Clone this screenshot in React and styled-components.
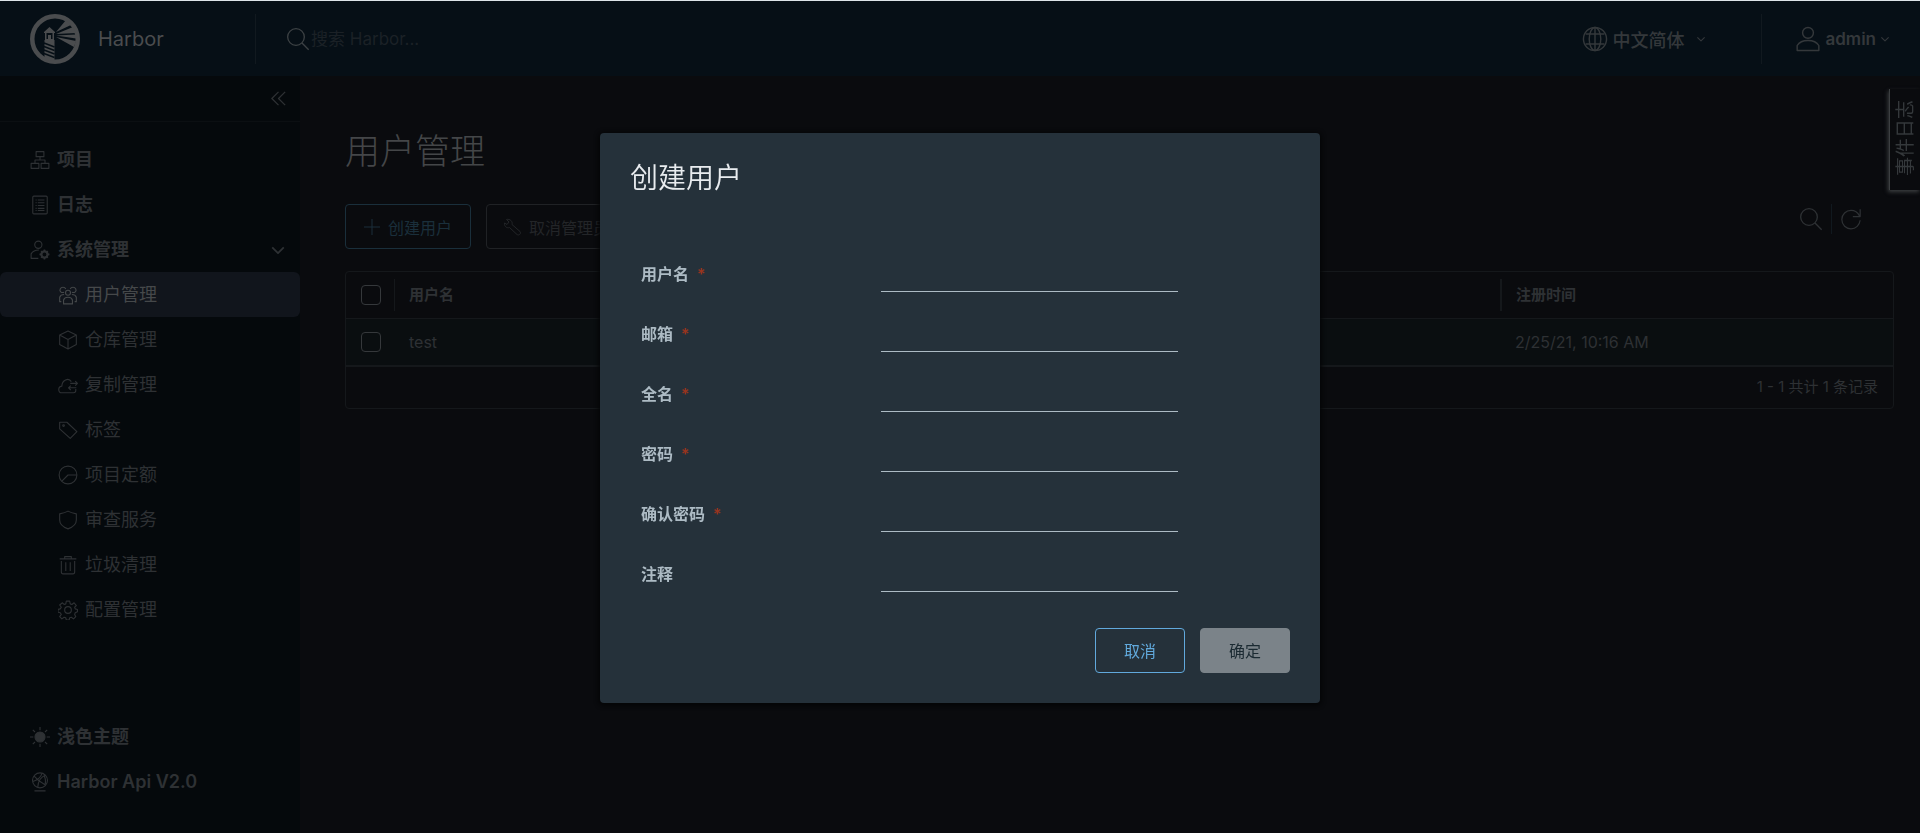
import React, { useState } from 'react'
import styled, { createGlobalStyle, css } from 'styled-components'

const GlobalStyle = createGlobalStyle`
  * {
    box-sizing: border-box;
  }
  body {
    margin: 0;
    background: #0a0b0e;
    color: #2e3134;
    font-family: Inter, "Noto Sans CJK SC", sans-serif;
    font-size: 17px;
  }
  button, input {
    font-family: inherit;
  }
`

const Page = styled.div`
  display: flex;
  flex-direction: column;
  min-height: 100vh;
  border-top: 1px solid #dde4e8;
`

const Header = styled.header`
  display: flex;
  align-items: center;
  height: 75px;
  padding: 0 30px;
  background: #060f16;
`

const Brand = styled.a`
  display: flex;
  align-items: center;
  gap: 18px;
  width: 225px;
  color: #4a4c4e;
  font-size: 20px;
  text-decoration: none;
`

const Divider = styled.span`
  width: 1px;
  height: ${props => props.$height || 50}px;
  background: #11191f;
`

const Search = styled.label`
  display: flex;
  flex: 1;
  align-items: center;
  gap: 1px;
  padding-left: 30px;
  color: #3c4144;
`

const SearchInput = styled.input`
  width: 300px;
  padding: 0;
  border: 0;
  outline: 0;
  background: transparent;
  color: #3c4144;
  font-size: 17px;
  &::placeholder {
    color: #1b2126;
  }
`

const HeaderButton = styled.button`
  display: flex;
  align-items: center;
  gap: 4px;
  padding: 0;
  border: 0;
  background: transparent;
  color: #34383b;
  font-size: ${props => props.$size || 18}px;
  font-weight: ${props => props.$weight || 500};
  cursor: pointer;
`

const LangButton = styled(HeaderButton)`
  margin-right: 55px;
`

const LangName = styled.span`
  margin-right: 8px;
`

const UserButton = styled(HeaderButton)`
  margin-left: 33px;
`

const Body = styled.div`
  display: flex;
  flex: 1;
`

const Sidebar = styled.nav`
  display: flex;
  flex-direction: column;
  width: 300px;
  padding-bottom: 29px;
  background: #05090c;
`

const Collapse = styled.div`
  display: flex;
  justify-content: flex-end;
  height: 46px;
  padding: 15px 14px;
  margin-bottom: 15px;
  border-bottom: 1px solid #0b0f12;
`

const IconButton = styled.button`
  display: flex;
  padding: 0;
  border: 0;
  background: transparent;
  color: #2e3134;
  cursor: pointer;
`

const NavItem = styled.a`
  display: flex;
  align-items: center;
  gap: 7px;
  height: 45px;
  padding: 0 14px 0 30px;
  color: #2e3134;
  font-size: 18px;
  font-weight: ${props => props.$weight || 700};
  line-height: 24px;
  text-decoration: none;
`

const SubItem = styled(NavItem)`
  padding-left: 58px;
  border-radius: 6px;
  font-weight: 400;
  ${props => props.$active && css`
    background: #11151c;
    color: #45484a;
  `}
`

const Grow = styled.span`
  flex: 1;
`

const Main = styled.main`
  flex: 1;
  min-width: 0;
  padding: 45px 26px 0 45px;
`

const Title = styled.h1`
  margin: 0;
  color: #444648;
  font-size: 35px;
  font-weight: 300;
  line-height: 60px;
`

const Toolbar = styled.div`
  display: flex;
  align-items: center;
  gap: 15px;
  height: 45px;
  margin: 23px 0 22px;
`

const ToolButton = styled.button`
  display: flex;
  align-items: center;
  gap: 7px;
  height: 45px;
  padding: 0 18px 0 17px;
  border: 1px solid ${props => props.disabled ? '#202225' : '#1a2f3b'};
  border-radius: 4px;
  background: transparent;
  color: ${props => props.disabled ? '#232528' : '#1a2f3b'};
  font-size: 16px;
`

const GridActions = styled.div`
  display: flex;
  align-items: center;
  align-self: flex-start;
  gap: 8px;
  margin-right: 32px;
`

const Grid = styled.div`
  border: 1px solid #15181b;
  border-radius: 4px;
`

const Table = styled.table`
  width: 100%;
  border-collapse: separate;
  border-spacing: 0;
  table-layout: fixed;
  text-align: left;
`

const HeadCell = styled.th`
  height: 47px;
  padding: 0 15px 0 0;
  border-bottom: 1px solid #15181b;
  font-size: 15px;
  font-weight: 700;
`

const HeadInner = styled.div`
  height: 32px;
  padding-left: 14px;
  border-left: ${props => props.$line || 1}px solid #15181b;
  line-height: 32px;
`

const Cell = styled.td`
  height: 48px;
  padding: 0 15px;
  border-bottom: 2px solid #15181b;
  background: #0a0e10;
  color: #2e3134;
  font-size: 16px;
`

const CheckHead = styled(HeadCell)`
  width: 48px;
  padding: 0 0 0 15px;
`

const CheckCell = styled(Cell)`
  width: 48px;
  padding: 0 0 0 15px;
`

const DateHead = styled(HeadCell)`
  width: 393px;
`

const Checkbox = styled.input`
  display: block;
  width: 20px;
  height: 20px;
  margin: 0;
  border: 1px solid #35383b;
  border-radius: 4px;
  appearance: none;
  &:checked {
    background: #1a2f3b;
  }
`

const GridFooter = styled.div`
  height: 41px;
  padding-right: 15px;
  font-size: 15px;
  line-height: 40px;
  text-align: right;
`

const EventTab = styled.button`
  position: fixed;
  top: 89px;
  right: 0;
  width: 31px;
  height: 101px;
  padding: 2px 0 0 1px;
  border: 0;
  border-left: 1px solid #3c3f41;
  background: #0a0b0e;
  box-shadow: -1px 2px 4px #3c3f41;
  color: #34383b;
  font-size: 19px;
  cursor: pointer;
`

const EventText = styled.span`
  display: inline-block;
  line-height: 28px;
  writing-mode: vertical-rl;
  text-orientation: sideways;
  transform: rotate(180deg);
`

const Overlay = styled.div`
  position: fixed;
  inset: 0;
  display: flex;
  align-items: center;
  justify-content: center;
  padding-top: 2px;
`

const Modal = styled.form`
  width: 720px;
  padding: 30px;
  border-radius: 4px;
  background: #25313a;
  box-shadow: 0 1px 4px 2px #050607;
`

const ModalTitle = styled.h2`
  margin: 0 0 56px;
  color: #e9ecef;
  font-size: 28px;
  font-weight: 350;
  line-height: 30px;
`

const Field = styled.div`
  display: flex;
  align-items: flex-start;
  height: 60px;
  padding-left: 11px;
`

const Label = styled.label`
  width: 240px;
  color: #adbbc4;
  font-size: 16px;
  font-weight: 700;
  line-height: 50px;
`

const Required = styled.span`
  margin-left: 8px;
  color: #983520;
`

const TextInput = styled.input`
  width: 297px;
  height: 30px;
  margin-top: 13px;
  padding: 0 8px;
  border: 0;
  border-bottom: 1px solid #adbbc4;
  outline: 0;
  background: transparent;
  color: #e9ecef;
  font-size: 16px;
`

const Footer = styled.div`
  display: flex;
  justify-content: flex-end;
  gap: 15px;
  padding-top: 19px;
`

const ModalButton = styled.button`
  width: 90px;
  height: 45px;
  border: 1px solid ${props => props.disabled ? '#7b8389' : '#61a9dc'};
  border-radius: 4px;
  background: ${props => props.disabled ? '#7b8389' : 'transparent'};
  color: ${props => props.disabled ? '#1b2a32' : '#61a9dc'};
  font-size: 16px;
`

// outline icons on a 36px grid
const paths = {
  search: <><circle cx="15" cy="15" r="12.500" /><path d="M24 24l10 10" /></>,
  globe: <><circle cx="18" cy="18" r="16" /><ellipse cx="18" cy="18" rx="8" ry="16" /><path d="M18 2v32M5 11h26M5 25h26" /></>,
  user: <><circle cx="18" cy="9.500" r="7.500" /><path d="M3 34v-7c3-5 9-7 15-7s12 2 15 7v7z" /></>,
  down: <path d="M5 12l13 13 13-13" />,
  collapse: <path d="M18 2L2 18l16 16M34 2L18 18l16 16" />,
  projects: <><path d="M11 3h14v9H11zM2 24h14v9H2zM20 24h14v9H20zM18 12v6M9 24v-6h18v6" /></>,
  logs: <><rect x="5" y="2" width="26" height="32" rx="2" /><path d="M10 9h2M14 9h12M10 14h2M14 14h12M10 19h2M14 19h12M10 24h2M14 24h12M10 28h2M14 28h12" /></>,
  admin: <><circle cx="15" cy="8.500" r="6.500" /><path d="M15 33H2v-8c3-5 7-7 14-7" /><circle cx="26" cy="26" r="5.500" strokeWidth="4" /><path d="M26 17v4M26 31v4M17 26h4M31 26h4M20 20l2 2M30 30l2 2M32 20l-2 2M20 32l2-2" strokeWidth="3" /></>,
  users: <><circle cx="18" cy="14" r="4.500" /><path d="M10 34v-7c1-3 4-5 8-5s7 2 8 5v7zM11 13c-5 2-9-2-7-6 2-4 8-4 10 0M25 13c5 2 9-2 7-6-2-4-8-4-10 0M6 30H3v-8c1-3 4-5 8-5M30 30h3v-8c-1-3-4-5-8-5" /></>,
  box: <path d="M18 2l15 7v17l-15 8-15-8V9zM3 9l15 8 15-8M18 17v17" />,
  cloud: <><path d="M32 25v3c0 3-2 4-4 4H7c-7 0-8-11 0-12C7 9 19 4 24 12" /><path d="M22 15h13M31 11l4 4-4 4M33 23H19M23 19l-4 4 4 4" /></>,
  tag: <><path d="M3 4h13l18 17-12 12L3 16z" /><circle cx="10" cy="10" r="1.500" /></>,
  quota: <><circle cx="18" cy="18" r="16" /><path d="M7 29l11-11h16" /></>,
  shield: <path d="M18 2c5 3 10 4 15 5v11c0 8-7 13-15 16C10 31 3 26 3 18V7c5-1 10-2 15-5z" />,
  trash: <path d="M3 7h30M12 7V3h12v4M6 11v19c0 3 1 4 3 4h18c2 0 3-1 3-4V11M14 13v16M22 13v16" />,
  cog: <><circle cx="18" cy="18" r="6" /><path d="M15 2h6l1 5 3 1 4-3 4 5-3 3 1 3 4 1v4l-4 2-1 3 2 4-4 4-4-3-3 1-1 4h-5l-1-4-3-1-4 3-4-4 3-4-2-3-4-1v-5l4-1 2-3-3-4 5-4 3 3 3-1z" /></>,
  sun: <><circle cx="18" cy="18" r="9" fill="currentColor" /><path d="M18 0v6M18 30v6M0 18h6M30 18h6M5 5l4 4M27 27l4 4M31 5l-4 4M9 27l-4 4" /></>,
  api: <><circle cx="18" cy="15" r="13.500" /><path d="M7 7c5 6 12 12 20 16M28 6c-9 3-13 9-14 21M5 17c8-2 14-7 17-15M27 23c2-6 1-11-2-17M8 34h20" /></>,
  plus: <path d="M18 2v32M2 18h32" />,
  wrench: <path d="M16 13c2-6-4-12-11-10l5 5-4 5-5-3c-1 7 5 11 10 9l15 14c4 3 9-2 6-6z" />,
  refresh: <path d="M33 20c-1 8-7 14-15 14S3 28 3 19 10 4 18 4c6 0 11 3 14 9M33 2v12H21" />,
}

function Icon({ name, size = 20, stroke = 2 }) {
  return (
    <svg width={size} height={size} viewBox="0 0 36 36" fill="none" stroke="currentColor" strokeWidth={stroke} strokeLinejoin="round" aria-hidden="true">
      {paths[name]}
    </svg>
  )
}

function Logo() {
  return (
    <svg width="50" height="50" viewBox="0 0 50 50" fill="#4a4c4e" aria-hidden="true">
      <circle cx="25" cy="25" r="22.750" fill="none" stroke="#4a4c4e" strokeWidth="4.500" />
      <path d="M14 18l5.500-5 5.500 5v1h-1v7h.500v21l-10-1V26h.500v-7h-1z" />
      <path d="M16.500 19h6v6h-1.500v-4h-3v4h-1.500z" fill="#060f16" />
      <path d="M14 29l10.500 4M14 32.500l10.500 4M14 36l10.500 4M14 39.500l10.500 4" stroke="#060f16" strokeWidth="1.500" />
      <path d="M26 18L36 6l5 5zM26 20l17-7 3 6zM26 21.500l20-1v4zM26 23l20 4-2 6z" />
    </svg>
  )
}

const children = [
  ['users', '用户管理'],
  ['box', '仓库管理'],
  ['cloud', '复制管理'],
  ['tag', '标签'],
  ['quota', '项目定额'],
  ['shield', '审查服务'],
  ['trash', '垃圾清理'],
  ['cog', '配置管理'],
]

const fields = [
  { id: 'username', label: '用户名', required: true },
  { id: 'email', label: '邮箱', required: true },
  { id: 'realname', label: '全名', required: true },
  { id: 'password', label: '密码', required: true, type: 'password' },
  { id: 'confirm', label: '确认密码', required: true, type: 'password' },
  { id: 'comment', label: '注释' },
]

function App() {
  const [values, setValues] = useState({})
  const valid = fields.every(f => !f.required || values[f.id])

  return (
    <>
      <GlobalStyle />
      <Page>
        <Header>
          <Brand href="#"><Logo />Harbor</Brand>
          <Divider />
          <Search>
            <Icon name="search" size={24} />
            <SearchInput placeholder="搜索 Harbor..." />
          </Search>
          <LangButton>
            <Icon name="globe" size={26} />
            <LangName>中文简体</LangName>
            <Icon name="down" size={10} stroke={4} />
          </LangButton>
          <Divider />
          <UserButton $size={17} $weight={600}>
            <Icon name="user" size={26} />
            admin
            <Icon name="down" size={10} stroke={4} />
          </UserButton>
        </Header>
        <Body>
          <Sidebar>
            <Collapse>
              <IconButton aria-label="collapse"><Icon name="collapse" size={15} stroke={3} /></IconButton>
            </Collapse>
            <NavItem href="#"><Icon name="projects" />项目</NavItem>
            <NavItem href="#"><Icon name="logs" />日志</NavItem>
            <NavItem href="#"><Icon name="admin" />系统管理<Grow /><Icon name="down" size={16} stroke={4} /></NavItem>
            {children.map(([icon, text], i) => (
              <SubItem key={icon} href="#" $active={i === 0}><Icon name={icon} />{text}</SubItem>
            ))}
            <Grow />
            <NavItem href="#"><Icon name="sun" />浅色主题</NavItem>
            <NavItem href="#" $weight={600}><Icon name="api" />Harbor Api V2.0</NavItem>
          </Sidebar>
          <Main>
            <Title>用户管理</Title>
            <Toolbar>
              <ToolButton><Icon name="plus" size={18} />创建用户</ToolButton>
              <ToolButton disabled><Icon name="wrench" size={18} />取消管理员</ToolButton>
              <Grow />
              <GridActions>
                <IconButton aria-label="search"><Icon name="search" size={24} /></IconButton>
                <Divider $height={30} />
                <IconButton aria-label="refresh"><Icon name="refresh" size={22} /></IconButton>
              </GridActions>
            </Toolbar>
            <Grid>
              <Table>
                <thead>
                  <tr>
                    <CheckHead><Checkbox type="checkbox" aria-label="select all" /></CheckHead>
                    <HeadCell><HeadInner>用户名</HeadInner></HeadCell>
                    <DateHead><HeadInner $line={2}>注册时间</HeadInner></DateHead>
                  </tr>
                </thead>
                <tbody>
                  <tr>
                    <CheckCell><Checkbox type="checkbox" aria-label="test" /></CheckCell>
                    <Cell>test</Cell>
                    <Cell>2/25/21, 10:16 AM</Cell>
                  </tr>
                </tbody>
              </Table>
              <GridFooter>1 - 1 共计 1 条记录</GridFooter>
            </Grid>
          </Main>
        </Body>
      </Page>
      <EventTab><EventText>事件日志</EventText></EventTab>
      <Overlay>
        <Modal onSubmit={e => e.preventDefault()}>
          <ModalTitle>创建用户</ModalTitle>
          {fields.map(f => (
            <Field key={f.id}>
              <Label htmlFor={f.id}>{f.label}{f.required && <Required>*</Required>}</Label>
              <TextInput
                id={f.id}
                type={f.type || 'text'}
                value={values[f.id] || ''}
                onChange={e => setValues({ ...values, [f.id]: e.target.value })}
              />
            </Field>
          ))}
          <Footer>
            <ModalButton type="button">取消</ModalButton>
            <ModalButton type="submit" disabled={!valid}>确定</ModalButton>
          </Footer>
        </Modal>
      </Overlay>
    </>
  )
}

export default App
